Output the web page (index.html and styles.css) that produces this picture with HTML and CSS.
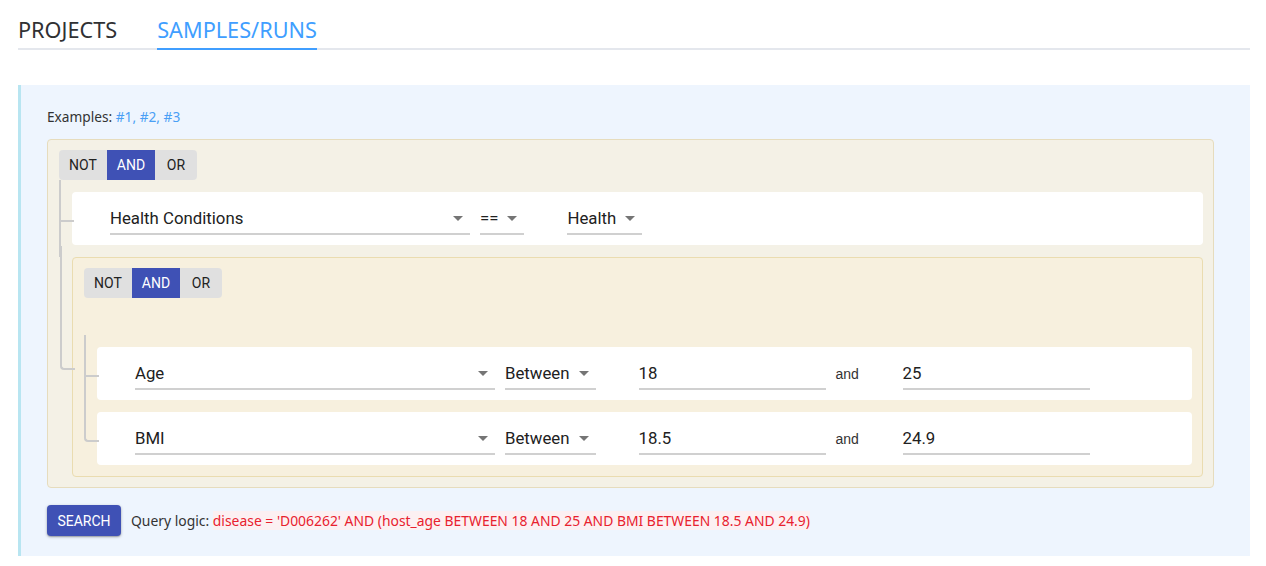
FILE: index.html
```html
<!DOCTYPE html>
<html lang="en">
<head>
    <meta charset="UTF-8">
    <title>Samples / Runs - Query Builder</title>
    <link rel="stylesheet" href="styles.css">
</head>
<body>
<div class="tabs">
    <div class="tab">PROJECTS</div>
    <div class="tab active">SAMPLES/RUNS</div>
</div>

<div class="panel">
    <div class="examples">
        Examples: <span class="example-links"><a href="#">#1</a>, <a href="#">#2</a>, <a href="#">#3</a></span>
    </div>

    <div class="rule-group">
        <div class="combinators">
            <button class="comb-btn">NOT</button>
            <button class="comb-btn on">AND</button>
            <button class="comb-btn">OR</button>
        </div>
        <div class="children">
            <div class="node rule">
                <div class="select field-select"><span>Health Conditions</span><svg class="caret" viewBox="0 0 24 24"><path d="M7 10l5 5 5-5z"/></svg></div>
                <div class="select op-select"><span>==</span><svg class="caret" viewBox="0 0 24 24"><path d="M7 10l5 5 5-5z"/></svg></div>
                <div class="select value-select"><span>Health</span><svg class="caret" viewBox="0 0 24 24"><path d="M7 10l5 5 5-5z"/></svg></div>
            </div>

            <div class="node rule-group nested">
                <div class="combinators">
                    <button class="comb-btn">NOT</button>
                    <button class="comb-btn on">AND</button>
                    <button class="comb-btn">OR</button>
                </div>
                <div class="children spaced">
                    <div class="node rule">
                        <div class="select field-select"><span>Age</span><svg class="caret" viewBox="0 0 24 24"><path d="M7 10l5 5 5-5z"/></svg></div>
                        <div class="select op-select"><span>Between</span><svg class="caret" viewBox="0 0 24 24"><path d="M7 10l5 5 5-5z"/></svg></div>
                        <div class="text-input">18</div>
                        <span class="and-label">and</span>
                        <div class="text-input second">25</div>
                    </div>
                    <div class="node rule">
                        <div class="select field-select"><span>BMI</span><svg class="caret" viewBox="0 0 24 24"><path d="M7 10l5 5 5-5z"/></svg></div>
                        <div class="select op-select"><span>Between</span><svg class="caret" viewBox="0 0 24 24"><path d="M7 10l5 5 5-5z"/></svg></div>
                        <div class="text-input">18.5</div>
                        <span class="and-label">and</span>
                        <div class="text-input second">24.9</div>
                    </div>
                </div>
            </div>
        </div>
    </div>

    <div class="actions">
        <button class="search-btn">SEARCH</button>
        <span class="query-logic">Query logic: <code>disease = 'D006262' AND (host_age BETWEEN 18 AND 25 AND BMI BETWEEN 18.5 AND 24.9)</code></span>
    </div>
</div>
</body>
</html>
```

FILE: styles.css
```css
* {
    margin: 0;
    padding: 0;
    box-sizing: border-box;
}
body {
    font-family: 'Noto Sans', 'Open Sans', sans-serif;
    background: #ffffff;
    color: #333;
}
.tabs {
    display: flex;
    gap: 40px;
    margin: 0 16px 0 18px;
    padding-top: 12px;
    border-bottom: 2px solid #e4e7ed;
}
.tab {
    font-size: 21.7px;
    line-height: 36px;
    color: #303133;
    border-bottom: 2px solid transparent;
    margin-bottom: -2px;
}
.tab.active {
    color: #409eff;
    border-bottom-color: #409eff;
}
.panel {
    margin: 35px 16px 0 18px;
    background: #eef5fe;
    border-left: 3px solid #b8e5f1;
    padding: 22px 36px 20px 26px;
}
.examples {
    font-size: 13.7px;
    line-height: 20px;
    color: #333;
}
.example-links,
.example-links a {
    color: #4a9ff5;
    text-decoration: none;
}
.rule-group {
    margin-top: 12px;
    background: #f4f1e6;
    border: 1px solid #e6dcbd;
    border-radius: 4px;
    padding: 10px 10px 10px 11px;
}
.rule-group.nested {
    margin-top: 0;
    background: #f7f0de;
    border-color: #eadcb0;
    padding-bottom: 11px;
}
.combinators {
    display: flex;
}
.comb-btn {
    height: 30px;
    width: 48px;
    border: none;
    background: #e0e0e0;
    color: #222;
    font-family: Roboto, sans-serif;
    font-size: 14px;
}
.comb-btn:first-child {
    border-radius: 4px 0 0 4px;
}
.comb-btn:last-child {
    width: 42px;
    border-radius: 0 4px 4px 0;
}
.comb-btn.on {
    background: #3f51b5;
    color: #ffffff;
}
.children {
    display: flex;
    flex-direction: column;
    gap: 12px;
    margin: 12px 0 0 13px;
}
.children.spaced {
    margin-top: 49px;
}
.children > .node {
    position: relative;
}
/* tree branch lines */
.children > .node::before {
    content: "";
    position: absolute;
    left: -13px;
    top: -12px;
    width: 13px;
    height: calc(50% + 13px);
    border-left: 2px solid #cccccc;
    border-bottom: 2px solid #cccccc;
}
.children > .node:last-child::before {
    border-bottom-left-radius: 4px;
}
.children > .node:not(:last-child)::after {
    content: "";
    position: absolute;
    left: -13px;
    top: 50%;
    bottom: -12px;
    border-left: 2px solid #cccccc;
}
.rule {
    height: 53px;
    background: #ffffff;
    border-radius: 4px;
    display: flex;
    align-items: center;
    padding-left: 38px;
    font-family: Roboto, sans-serif;
    color: #212121;
}
.select {
    display: flex;
    align-items: center;
    justify-content: space-between;
    height: 32px;
    border-bottom: 2px solid #d0d0d0;
    font-size: 16.8px;
}
.caret {
    width: 24px;
    height: 24px;
    fill: #757575;
    flex-shrink: 0;
    margin-left: 2px;
}
.field-select {
    width: 360px;
}
.op-select {
    margin-left: 10px;
}
.value-select {
    margin-left: 43px;
}
.text-input {
    width: 187px;
    height: 32px;
    line-height: 30px;
    border-bottom: 2px solid #d0d0d0;
    font-size: 16.8px;
    margin-left: 43px;
}
.text-input.second {
    margin-left: 0;
}
.and-label {
    width: 77px;
    padding-left: 10px;
    font-family: 'Liberation Sans', Arial, sans-serif;
    font-size: 14px;
    color: #333;
}
.actions {
    margin-top: 17px;
    display: flex;
    align-items: center;
    gap: 10px;
}
.search-btn {
    width: 74px;
    height: 31px;
    border: none;
    border-radius: 4px;
    background: #3f51b5;
    color: #ffffff;
    font-family: Roboto, sans-serif;
    font-size: 14px;
    box-shadow: 0 1px 3px rgba(0,0,0,0.3), 0 1px 1px rgba(0,0,0,0.14);
}
.query-logic {
    font-size: 13.9px;
    color: #333;
}
.query-logic code {
    font-family: 'Noto Sans', 'Open Sans', sans-serif;
    color: #e8212e;
    background: #fcf0f2;
}
```
